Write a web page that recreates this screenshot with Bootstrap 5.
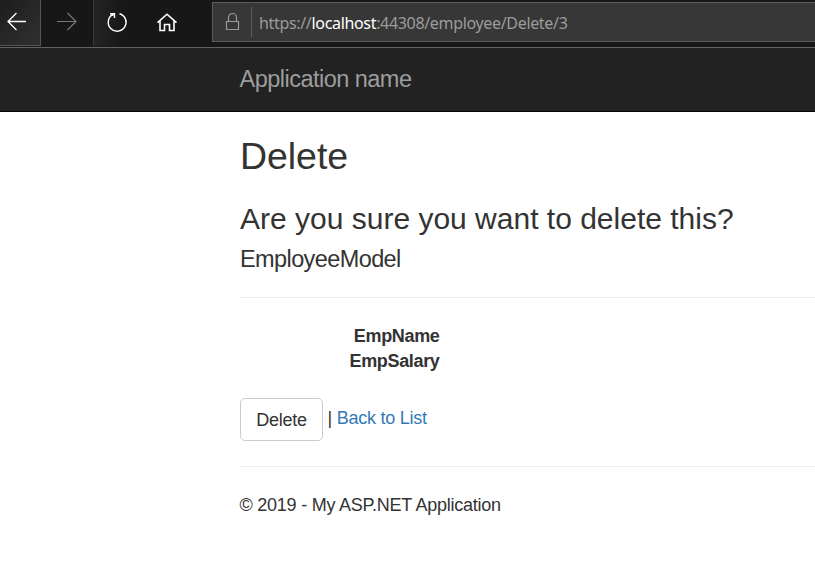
<!DOCTYPE html>
<html lang="en">
<head>
<meta charset="utf-8">
<title>Delete - My ASP.NET Application</title>
<link rel="stylesheet" href="https://cdn.jsdelivr.net/npm/bootstrap@5.3.0/dist/css/bootstrap.min.css">
<style>
body { font-family: "Liberation Sans", Arial, sans-serif; font-size: 18px; line-height: 25px; color: #333; letter-spacing: -.24px; }
.toolbar { height: 48px; background: #171717; border-bottom: 1px solid #626262; padding-bottom: 1px; }
.tool { height: 46px; }
.tool-back { width: 41px; background: linear-gradient(135deg, #1d1d1d, #303030); border: solid #555; border-width: 0 1px 1px 0; }
.tool-forward { width: 52px; }
.tool-reload { width: 50px; background: linear-gradient(90deg, #242424, #171717 60%); border: solid #383838; border-width: 0 0 0 1px; }
.tool-home { width: 50px; }
.address { height: 40px; margin: 2px 0 0 19px; background: #373737; border: 1px solid #5c5c5c; border-right: 0; font-family: "Noto Sans", sans-serif; font-size: 16px; color: #9b9b9b; }
.address-lock { width: 39px; height: 30px; border-right: 1px solid #5c5c5c; }
.address-url { padding: 2px 0 0 7px; letter-spacing: -.33px; white-space: nowrap; }
.address-url span { color: #fff; }
.site-bar { height: 64px; background: #222; border-bottom: 1px solid #080808; padding-left: 239.5px; }
.site-bar .navbar-brand { font-size: 23.5px; line-height: 25px; color: #9d9d9d; padding: 19px 0 0; letter-spacing: -.52px; }
.page { padding: 24px 0 0 240px; }
.page h2 { font-size: 37.5px; line-height: 41px; margin: 0 0 25px; font-weight: 400; letter-spacing: -.05px; }
.page h3 { font-size: 30px; line-height: 33px; margin: 0 0 12px; font-weight: 400; letter-spacing: 0; }
.page h4 { font-size: 23.5px; line-height: 25px; margin: 0 0 25px; font-weight: 400; letter-spacing: -.6px; }
.page hr { margin: 0; border-top: 1px solid #eee; opacity: 1; }
.fields { width: 199.5px; margin: 26px 0 24px; }
.fields dt { text-align: right; letter-spacing: -.34px; }
.btn-delete { --bs-btn-font-size: 18px; --bs-btn-padding-x: 14px; --bs-btn-border-color: #ccc; --bs-btn-color: #333; --bs-btn-bg: #fff; --bs-btn-border-radius: 5px; width: 83px; height: 43px; padding-top: 9px; padding-bottom: 7px; line-height: 25px; letter-spacing: -.24px; }
.back { padding: 8px 0 0 4.5px; }
.back a { color: #337ab7; }
.page .footer-rule { margin-top: 25px; }
.copyright { padding-top: 26px; margin-left: -.5px; }
</style>
</head>
<body class="overflow-hidden">
<div class="toolbar d-flex">
  <div class="tool tool-back d-flex"><svg width="40" height="45" fill="none" stroke="#fff" stroke-width="1.3"><path d="M7.500 21.500H26M16.500 13L8 21.500l8.500 8.500"/></svg></div>
  <div class="tool tool-forward d-flex"><svg width="52" height="45" fill="none" stroke="#777" stroke-width="1.200"><path d="M16 21.500h19M26.500 13l8.500 8.500-8.500 8.500"/></svg></div>
  <div class="tool tool-reload d-flex"><svg width="49" height="45" fill="none" stroke="#fff" stroke-width="1.400"><path d="M25.500 13.700A8.900 8.900 0 1 1 18.500 14.700M16 13.700h4.500V18M20.500 13.700L18.300 15.500"/></svg></div>
  <div class="tool tool-home d-flex"><svg width="50" height="45" fill="none" stroke="#fff" stroke-width="1.600"><path d="M14.500 22.700L24 14.200l9.500 8.500M17 21v9.500h4.500v-6h5v6H31V21"/></svg></div>
  <div class="address d-flex align-items-center flex-grow-1">
    <div class="address-lock d-flex"><svg width="38" height="30" fill="none" stroke="#999" stroke-width="1.200"><path d="M13.500 14.500h12v8h-12zM15.500 14.500v-4a4 4 0 0 1 8 0v4"/></svg></div>
    <div class="address-url">https://<span>localhost</span>:44308/employee/Delete/3</div>
  </div>
</div>
<nav class="site-bar d-flex align-items-start"><a class="navbar-brand" href="#">Application name</a></nav>
<main class="page">
  <h2>Delete</h2>
  <h3>Are you sure you want to delete this?</h3>
  <h4>EmployeeModel</h4>
  <hr>
  <dl class="fields"><dt>EmpName</dt><dt>EmpSalary</dt></dl>
  <form class="d-flex align-items-start">
    <button type="button" class="btn btn-delete">Delete</button>
    <div class="back">| <a class="text-decoration-none" href="#">Back to List</a></div>
  </form>
  <hr class="footer-rule">
  <footer class="copyright">© 2019 - My ASP.NET Application</footer>
</main>
<script src="https://cdn.jsdelivr.net/npm/bootstrap@5.3.0/dist/js/bootstrap.bundle.min.js"></script>
</body>
</html>
